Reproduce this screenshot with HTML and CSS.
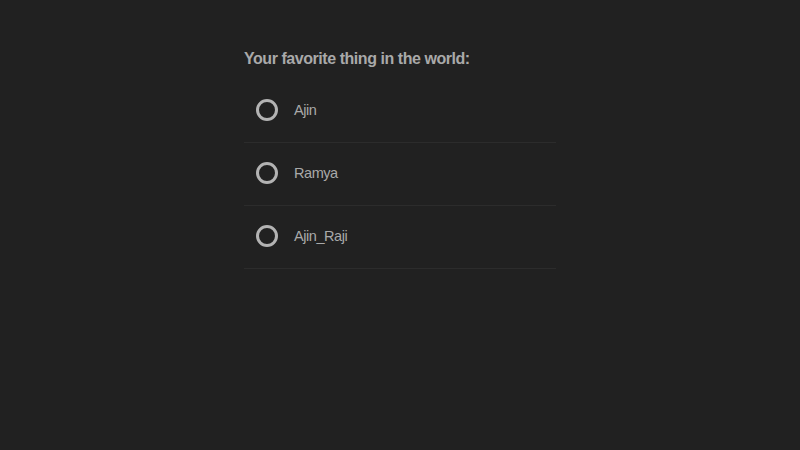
FILE: index.html
```html
<!DOCTYPE html>
<html lang="en">
  <head>
    <meta charset="UTF-8" />
    <meta name="viewport" content="width=device-width, initial-scale=1.0" />
    <title>Favorite thing</title>
    <link rel="stylesheet" href="styles.css">
  </head>
  <body>
    <div class="container">
      <h3 class="question">Your favorite thing in the world:</h3>
      <div class="options">
        <label class="option">
          <input type="radio" name="fav" value="ajin" />
          <span class="circle"></span>
          <span class="text">Ajin</span>
        </label>
        <label class="option">
          <input type="radio" name="fav" value="ramya" />
          <span class="circle"></span>
          <span class="text">Ramya</span>
        </label>
        <label class="option">
          <input type="radio" name="fav" value="ajin_raji" />
          <span class="circle"></span>
          <span class="text">Ajin_Raji</span>
        </label>
      </div>
    </div>
  </body>
</html>
```

FILE: styles.css
```css
body {
  margin: 0;
  padding: 0;
  background-color: #212121;
  font-family: "Liberation Sans", Arial, sans-serif;
  color: #a9a9a9;
}

.container {
  width: 312px;
  margin: 0 auto;
  padding-top: 49px;
}

.question {
  margin: 0 0 11px;
  font-size: 16px;
  line-height: 20px;
  font-weight: bold;
  letter-spacing: -0.45px;
  color: #a9a9a9;
}

.option {
  box-sizing: border-box;
  display: flex;
  align-items: center;
  height: 63px;
  padding-left: 12px;
  padding-bottom: 2px;
  border-bottom: 1px solid #2c2c2c;
  cursor: pointer;
}

.option input {
  display: none;
}

.circle {
  width: 16px;
  height: 16px;
  border: 3px solid #b3b3b3;
  border-radius: 50%;
  margin-right: 16px;
}

.text {
  font-size: 14.5px;
  letter-spacing: -0.45px;
}
```
